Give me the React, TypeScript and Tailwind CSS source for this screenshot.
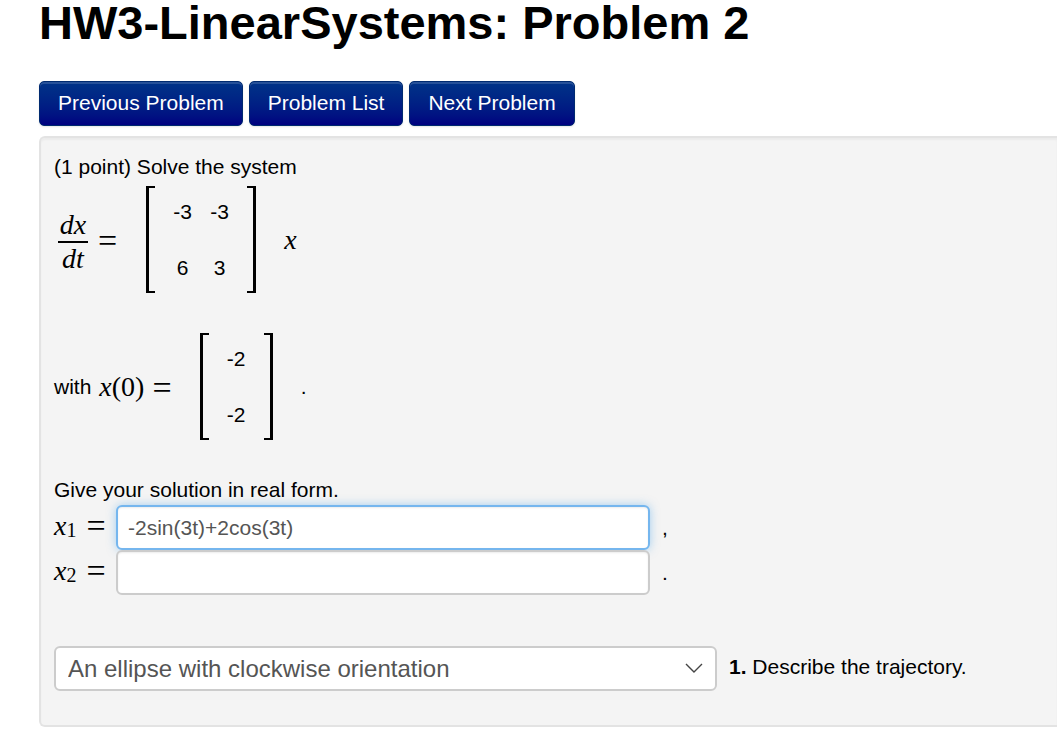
import { useState } from 'react';
import type { ReactNode } from 'react';

const NAV_ITEMS = ['Previous Problem', 'Problem List', 'Next Problem'];

const TRAJECTORIES = [
  'An ellipse with clockwise orientation',
  'An ellipse with counterclockwise orientation',
  'A spiral with clockwise orientation',
  'A spiral with counterclockwise orientation',
];

function Var({ children }: { children: ReactNode }) {
  return <i className="font-['Liberation_Serif',serif] text-[28px] leading-7">{children}</i>;
}

function Equals() {
  return <span className="font-['Liberation_Serif',serif] text-[34px] leading-7">=</span>;
}

function Matrix({ rows }: { rows: number[][] }) {
  return (
    <div className="flex h-[107px] items-center">
      <div className="w-[9px] self-stretch border-y-2 border-l-[3px] border-black" />
      <table className="mx-[9px] text-center">
        <tbody>
          {rows.map((row, i) => (
            <tr key={i}>
              {row.map((value, j) => (
                <td key={j} className="h-14 w-[37px] p-0">{value}</td>
              ))}
            </tr>
          ))}
        </tbody>
      </table>
      <div className="w-[9px] self-stretch border-y-2 border-r-[3px] border-black" />
    </div>
  );
}

interface AnswerProps {
  index: number;
  value: string;
  active?: boolean;
  end: string;
  onChange: (value: string) => void;
}

function AnswerRow({ index, value, active, end, onChange }: AnswerProps) {
  const id = `answer-${index}`;
  return (
    <div className="flex items-center">
      <label htmlFor={id} className="flex w-[62px] shrink-0 items-center pb-1">
        <Var>x</Var>
        <span className="mr-2.5 mt-2 font-['Liberation_Serif',serif] text-xl leading-5">{index}</span>
        <Equals />
      </label>
      <input
        id={id}
        type="text"
        value={value}
        onChange={e => onChange(e.target.value)}
        className={`h-[45px] w-full max-w-[534px] rounded-md border-2 bg-white px-2.5 text-[#555] outline-none ${
          active
            ? 'border-[#75b6ee] shadow-[inset_0_1px_2px_rgba(0,0,0,0.08),0_0_10px_rgba(82,168,236,0.5)]'
            : 'border-[#ccc] shadow-[inset_0_1px_2px_rgba(0,0,0,0.08)]'
        }`}
      />
      <span className="ml-3">{end}</span>
    </div>
  );
}

export default function App() {
  const [answers, setAnswers] = useState(['-2sin(3t)+2cos(3t)', '']);
  const [trajectory, setTrajectory] = useState(TRAJECTORIES[0]);

  const setAnswer = (i: number, value: string) =>
    setAnswers(answers.map((a, j) => (j === i ? value : a)));

  return (
    <main className="bg-white pb-2 pl-[39px] font-['Liberation_Sans',Arial,sans-serif] text-[21px] leading-[30px] text-black">
      <h1 className="text-[47px] font-bold leading-[45px]">HW3-LinearSystems: Problem 2</h1>

      <nav className="mt-9 flex gap-1.5">
        {NAV_ITEMS.map(item => (
          <button
            key={item}
            type="button"
            className="h-[45px] rounded-[5px] border border-[#002a70] bg-linear-to-b from-[#003388] to-[#000080] px-[18px] pb-0.5 text-white shadow-[inset_0_2px_0_rgba(255,255,255,0.15),0_1px_2px_rgba(0,0,0,0.1)]"
          >
            {item}
          </button>
        ))}
      </nav>

      <section className="mt-2.5 rounded-l-md border-2 border-r-0 border-[#e3e3e3] bg-[#f4f4f4] pb-[34px] pl-[13px] pt-3.5 shadow-[inset_0_2px_2px_rgba(0,0,0,0.04)]">
        <p>(1 point) Solve the system</p>

        <div className="mt-1 flex items-center">
          <div className="ml-1 flex w-[30px] flex-col items-center pt-1">
            <Var>dx</Var>
            <div className="my-0.5 h-0.5 w-full bg-black" />
            <Var>dt</Var>
          </div>
          <div className="ml-2.5 mr-[29px] pt-2"><Equals /></div>
          <Matrix rows={[[-3, -3], [6, 3]]} />
          <div className="ml-7 pt-1"><Var>x</Var></div>
        </div>

        <div className="mt-10 flex items-center">
          <span className="mr-2">with</span>
          <Var>x</Var>
          <span className="mr-2 font-['Liberation_Serif',serif] text-[28px] leading-7">(0)</span>
          <div className="mr-7 pt-2"><Equals /></div>
          <Matrix rows={[[-2], [-2]]} />
          <span className="ml-7">.</span>
        </div>

        <p className="mt-[35px]">Give your solution in real form.</p>
        <AnswerRow index={1} value={answers[0]} active end="," onChange={v => setAnswer(0, v)} />
        <AnswerRow index={2} value={answers[1]} end="." onChange={v => setAnswer(1, v)} />

        <div className="mt-[51px] flex items-center">
          <div className="relative w-full max-w-[663px]">
            <select
              id="trajectory"
              value={trajectory}
              onChange={e => setTrajectory(e.target.value)}
              className="block h-[45px] w-full appearance-none rounded-md border-2 border-[#ccc] bg-white pl-3 pr-12 text-2xl text-[#555] outline-none"
            >
              {TRAJECTORIES.map(t => <option key={t}>{t}</option>)}
            </select>
            <svg
              className="pointer-events-none absolute right-3.5 top-[17px] h-[11px] w-[18px]"
              viewBox="0 0 18 11"
              fill="none"
              stroke="#444"
              strokeWidth="1.4"
            >
              <path d="M1 1l8 8 8-8" />
            </svg>
          </div>
          <label htmlFor="trajectory" className="ml-3 whitespace-nowrap pb-1">
            <b>1.</b> Describe the trajectory.
          </label>
        </div>
      </section>
    </main>
  );
}
